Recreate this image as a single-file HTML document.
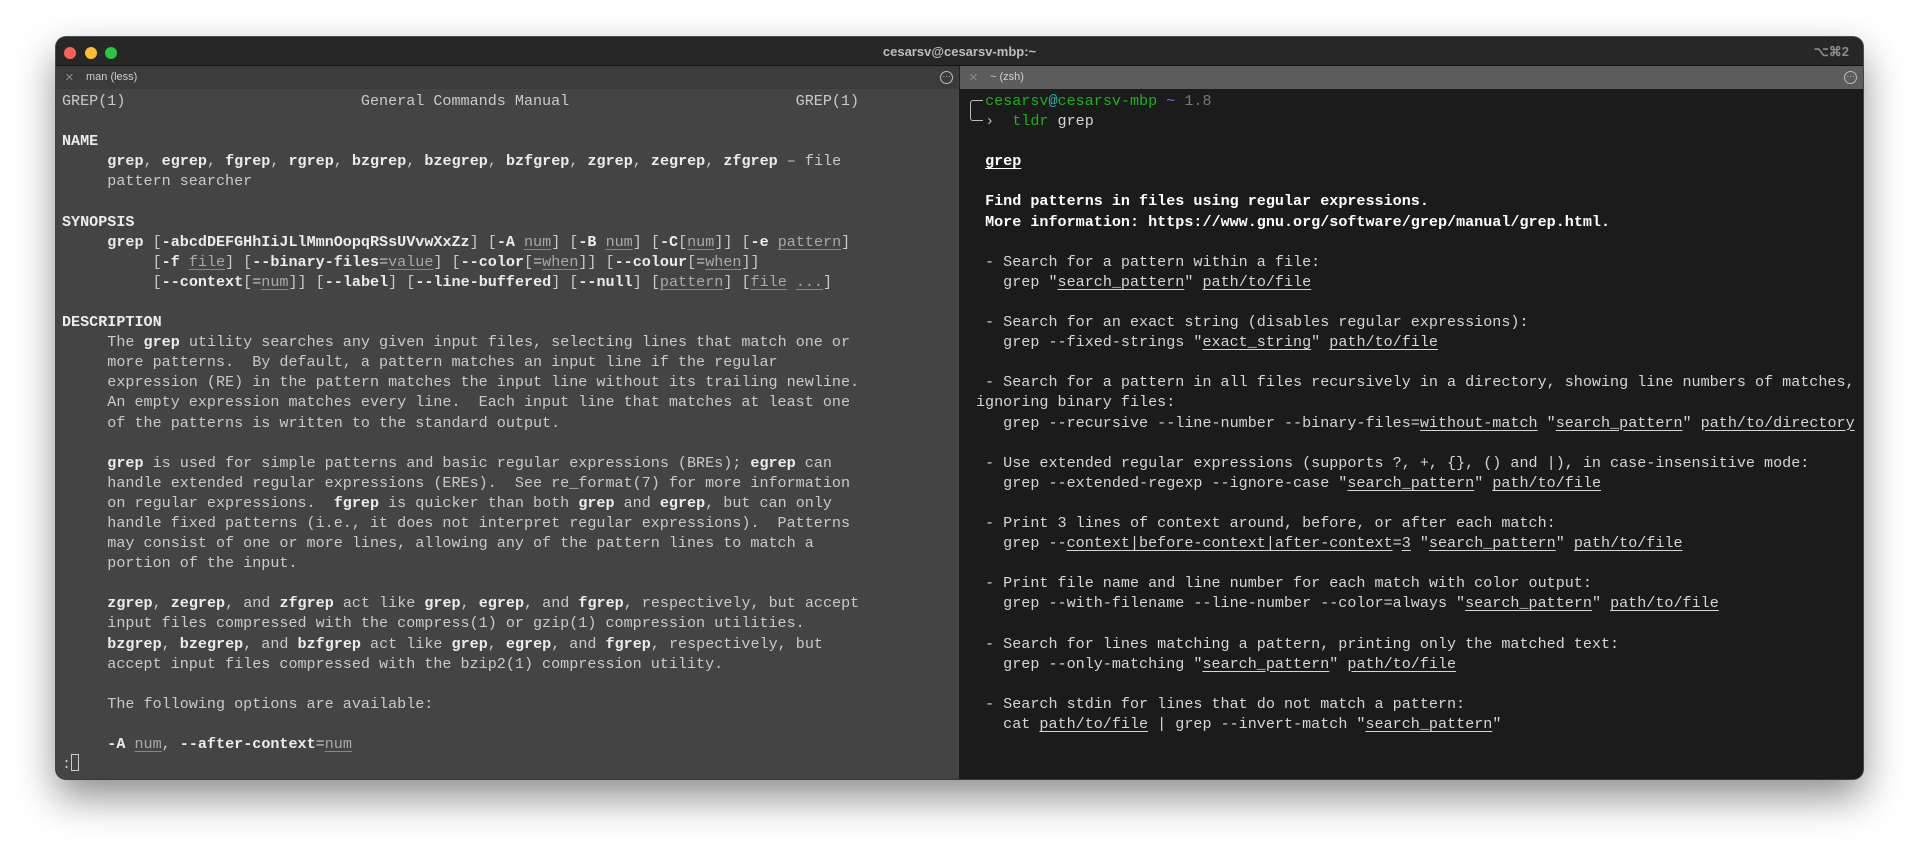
<!DOCTYPE html>
<html><head><meta charset="utf-8"><style>
*{margin:0;padding:0;box-sizing:border-box}
body{width:1920px;height:854px;background:#fff;position:relative;overflow:hidden;font-family:"Liberation Sans",sans-serif}
.win{position:absolute;left:56px;top:37px;width:1807px;height:742px;border-radius:10px;background:#262626;overflow:hidden;box-shadow:0 18px 40px rgba(0,0,0,.45),0 0 0 1px #555}
.title{position:absolute;left:0;top:0;width:100%;height:29px;background:#272727;border-bottom:1px solid #111;text-align:center;color:#bdbdbd;font-weight:bold;font-size:13px;line-height:29px}
.dot{position:absolute;top:10px;width:12px;height:12px;border-radius:50%}
.kbd{position:absolute;right:14px;top:0;color:#8a8a8a;font-size:13px;font-weight:bold;line-height:29px}
.tab{position:absolute;top:29px;height:23px;font-size:11px;color:#cfcfcf;line-height:23px}
.tab .x{position:absolute;left:9px;top:0;color:#8a8a8a;font-size:15px}
.tab .lbl{position:absolute;left:30px}
.more{position:absolute;right:6px;top:5px;width:13px;height:13px;border:1px solid #bbb;border-radius:50%;font-size:8px;line-height:9px;text-align:center;color:#ccc}
.pane{position:absolute;top:52px;height:690px;overflow:hidden}
pre{position:absolute;font-family:"Liberation Mono",monospace;font-size:15.1px;line-height:20.1px;white-space:pre}
#L{background:#444;left:0;width:903px}
#L pre{left:6px;top:2px;color:#cacaca}
#L b{color:#ececec}
#L u{color:#a9a9a9;text-decoration:underline;text-decoration-color:#888;text-underline-offset:3px}
#R{background:#1b1b1b;left:903px;width:904px}
#R pre{left:17px;top:2px;color:#d6d6d6}
#R b{color:#fff}
#R u{text-underline-offset:3px}
.g{color:#19b219}.c{color:#2ab3b3}.bl{color:#6f6ff0}.gr{color:#777}
</style></head><body>
<div class="win">
 <div class="title">cesarsv@cesarsv-mbp:~
  <div class="dot" style="left:8px;background:#fe5f57"></div>
  <div class="dot" style="left:29px;background:#febc2e"></div>
  <div class="dot" style="left:49px;background:#28c840"></div>
  <div class="kbd">⌥⌘2</div>
 </div>
 <div class="tab" style="left:0;width:903px;background:#3b3b3b"><span class="x">×</span><span class="lbl">man (less)</span><div class="more">···</div></div>
 <div class="tab" style="left:903px;width:904px;background:#5c5c5c;border-left:1px solid #222"><span class="x">×</span><span class="lbl">~ (zsh)</span><div class="more">···</div></div>
 <div class="pane" id="L"><pre>GREP(1)                          General Commands Manual                         GREP(1)

<b>NAME</b>
     <b>grep</b>, <b>egrep</b>, <b>fgrep</b>, <b>rgrep</b>, <b>bzgrep</b>, <b>bzegrep</b>, <b>bzfgrep</b>, <b>zgrep</b>, <b>zegrep</b>, <b>zfgrep</b> – file
     pattern searcher

<b>SYNOPSIS</b>
     <b>grep</b> [<b>-abcdDEFGHhIiJLlMmnOopqRSsUVvwXxZz</b>] [<b>-A</b> <u>num</u>] [<b>-B</b> <u>num</u>] [<b>-C</b>[<u>num</u>]] [<b>-e</b> <u>pattern</u>]
          [<b>-f</b> <u>file</u>] [<b>--binary-files</b>=<u>value</u>] [<b>--color</b>[=<u>when</u>]] [<b>--colour</b>[=<u>when</u>]]
          [<b>--context</b>[=<u>num</u>]] [<b>--label</b>] [<b>--line-buffered</b>] [<b>--null</b>] [<u>pattern</u>] [<u>file</u> <u>...</u>]

<b>DESCRIPTION</b>
     The <b>grep</b> utility searches any given input files, selecting lines that match one or
     more patterns.  By default, a pattern matches an input line if the regular
     expression (RE) in the pattern matches the input line without its trailing newline.
     An empty expression matches every line.  Each input line that matches at least one
     of the patterns is written to the standard output.

     <b>grep</b> is used for simple patterns and basic regular expressions (BREs); <b>egrep</b> can
     handle extended regular expressions (EREs).  See re_format(7) for more information
     on regular expressions.  <b>fgrep</b> is quicker than both <b>grep</b> and <b>egrep</b>, but can only
     handle fixed patterns (i.e., it does not interpret regular expressions).  Patterns
     may consist of one or more lines, allowing any of the pattern lines to match a
     portion of the input.

     <b>zgrep</b>, <b>zegrep</b>, and <b>zfgrep</b> act like <b>grep</b>, <b>egrep</b>, and <b>fgrep</b>, respectively, but accept
     input files compressed with the compress(1) or gzip(1) compression utilities.
     <b>bzgrep</b>, <b>bzegrep</b>, and <b>bzfgrep</b> act like <b>grep</b>, <b>egrep</b>, and <b>fgrep</b>, respectively, but
     accept input files compressed with the bzip2(1) compression utility.

     The following options are available:

     <b>-A</b> <u>num</u>, <b>--after-context</b>=<u>num</u>
:<span style="display:inline-block;width:8px;height:17px;border:1px solid #ccc;vertical-align:-3px"></span></pre></div>
 <div class="pane" id="R">
  <div style="position:absolute;left:11px;top:11px;width:13px;height:21px;border:1.5px solid #bbb;border-right:none;border-radius:3px 0 0 3px"></div>
  <pre> <span class="g">cesarsv</span><span class="c">@</span><span class="g">cesarsv-mbp</span> <span class="bl">~</span> <span class="gr">1.8</span>
 <span style="color:#bbb">›</span>  <span class="g">tldr</span> grep

 <b><u>grep</u></b>

 <b>Find patterns in files using regular expressions.</b>
 <b>More information: https://www.gnu.org/software/grep/manual/grep.html.</b>

 - Search for a pattern within a file:
   grep "<u>search_pattern</u>" <u>path/to/file</u>

 - Search for an exact string (disables regular expressions):
   grep --fixed-strings "<u>exact_string</u>" <u>path/to/file</u>

 - Search for a pattern in all files recursively in a directory, showing line numbers of matches,
ignoring binary files:
   grep --recursive --line-number --binary-files=<u>without-match</u> "<u>search_pattern</u>" <u>path/to/directory</u>

 - Use extended regular expressions (supports ?, +, {}, () and |), in case-insensitive mode:
   grep --extended-regexp --ignore-case "<u>search_pattern</u>" <u>path/to/file</u>

 - Print 3 lines of context around, before, or after each match:
   grep --<u>context|before-context|after-context</u>=<u>3</u> "<u>search_pattern</u>" <u>path/to/file</u>

 - Print file name and line number for each match with color output:
   grep --with-filename --line-number --color=always "<u>search_pattern</u>" <u>path/to/file</u>

 - Search for lines matching a pattern, printing only the matched text:
   grep --only-matching "<u>search_pattern</u>" <u>path/to/file</u>

 - Search stdin for lines that do not match a pattern:
   cat <u>path/to/file</u> | grep --invert-match "<u>search_pattern</u>"</pre></div>
</div>
</body></html>
